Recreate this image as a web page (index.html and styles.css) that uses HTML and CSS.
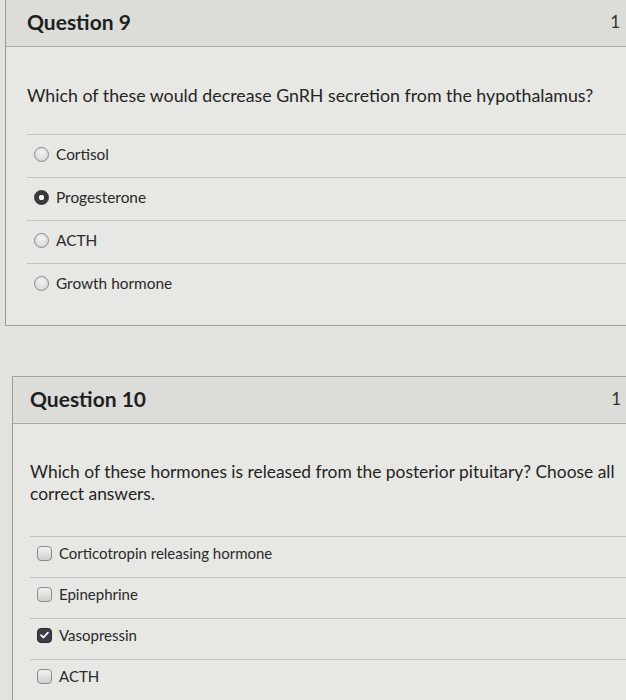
FILE: index.html
```html
<!DOCTYPE html>
<html>
<head>
<meta charset="utf-8">
<link rel="stylesheet" href="styles.css">
</head>
<body>
<div class="page">
  <section class="card q9">
    <header class="card-head">
      <h2 class="title">Question 9</h2>
      <span class="pts">1</span>
    </header>
    <div class="card-body">
      <p class="prompt">Which of these would decrease GnRH secretion from the hypothalamus?</p>
      <ul class="answers">
        <li class="answer"><span class="radio"></span><span>Cortisol</span></li>
        <li class="answer"><span class="radio checked"></span><span>Progesterone</span></li>
        <li class="answer"><span class="radio"></span><span>ACTH</span></li>
        <li class="answer"><span class="radio"></span><span>Growth hormone</span></li>
      </ul>
    </div>
  </section>

  <section class="card q10">
    <header class="card-head">
      <h2 class="title">Question 10</h2>
      <span class="pts">1</span>
    </header>
    <div class="card-body">
      <p class="prompt">Which of these hormones is released from the posterior pituitary? Choose all correct answers.</p>
      <ul class="answers">
        <li class="answer"><span class="check"></span><span>Corticotropin releasing hormone</span></li>
        <li class="answer"><span class="check"></span><span>Epinephrine</span></li>
        <li class="answer"><span class="check checked"><svg viewBox="0 0 14 14" width="14" height="14"><path d="M3.3 7.2 L5.9 9.7 L10.7 4.4" fill="none" stroke="#fff" stroke-width="1.9" stroke-linecap="round" stroke-linejoin="round"/></svg></span><span>Vasopressin</span></li>
        <li class="answer"><span class="check"></span><span>ACTH</span></li>
      </ul>
    </div>
  </section>
</div>
</body>
</html>
```

FILE: styles.css
```css
html, body {
  margin: 0;
  padding: 0;
}
body {
  background: #e2e2de;
  font-family: Lato, "Open Sans", sans-serif;
  color: #2c2c2c;
  overflow: hidden;
  width: 626px;
  height: 700px;
}
.page {
  display: flex;
  flex-direction: column;
  gap: 50px;
}
.card {
  border-left: 1px solid #9a9a96;
  border-bottom: 1px solid #a4a4a0;
  background: #e7e7e3;
  margin-right: -12px;
}
.q9 {
  margin-left: 5px;
}
.q10 {
  margin-left: 12px;
  border-top: 1px solid #a4a4a0;
  border-bottom: none;
}
.card-head {
  display: flex;
  align-items: center;
  justify-content: space-between;
  background: #dcdcd8;
  border-bottom: 1px solid #a8a8a4;
  padding-left: 21px;
  padding-right: 14px;
  box-sizing: border-box;
}
.q9 .card-head {
  height: 47px;
  padding-bottom: 4px;
  padding-right: 18px;
}
.q10 .card-head {
  height: 47px;
  padding-left: 17px;
  padding-right: 17px;
  padding-bottom: 3px;
}
.title {
  margin: 0;
  font-size: 21px;
  font-weight: 700;
  color: #1f1f1f;
}
.pts {
  font-size: 17px;
  color: #333;
}
.card-body {
  padding: 36px 0 19px 21px;
}
.q10 .card-body {
  padding: 37px 0 0 17px;
}
.prompt {
  margin: 0 0 27px;
  font-size: 17.8px;
  line-height: 24px;
  color: #252525;
}
.q10 .prompt {
  font-size: 17.4px;
  line-height: 22px;
  margin-bottom: 31px;
  padding-right: 4px;
}
.answers {
  list-style: none;
  margin: 0;
  padding: 0;
}
.answer {
  display: flex;
  align-items: center;
  gap: 7px;
  border-top: 1px solid #c4c4c0;
  padding: 0 0 4px 7px;
  box-sizing: border-box;
  height: 43px;
  font-size: 15.4px;
  color: #2a2a2a;
}
.q10 .answer {
  height: 41px;
  padding-bottom: 8px;
  font-size: 15px;
}
.radio {
  width: 13px;
  height: 13px;
  border-radius: 50%;
  border: 1px solid #8a8a88;
  background: radial-gradient(circle at 50% 35%, #f4f4f2, #cfcfcc);
  flex: none;
}
.radio.checked {
  border-color: #333;
  background: radial-gradient(circle, #f2f2f2 0 2.5px, #3a3a3e 3px);
}
.check {
  width: 13px;
  height: 13px;
  border-radius: 4px;
  border: 1px solid #8a8a88;
  background: linear-gradient(#f2f2f0, #d0d0cd);
  flex: none;
  display: flex;
  align-items: center;
  justify-content: center;
}
.check.checked {
  background: #3c3c44;
  border-color: #2a2a30;
}
.check svg {
  display: block;
}
```
